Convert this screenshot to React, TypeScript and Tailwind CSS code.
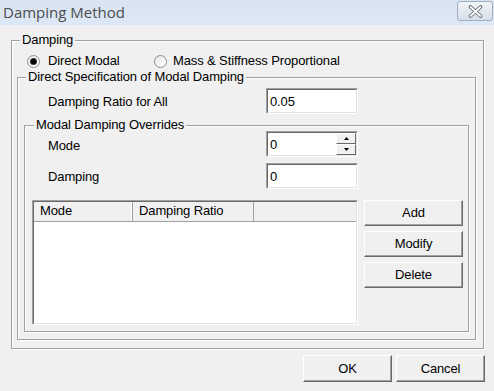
import React from 'react';

const font = "font-['Liberation_Sans',Arial,sans-serif] tracking-[-0.12px]";

const GroupBox: React.FC<{
  label: string;
  labelLeft: string;
  className: string;
  children?: React.ReactNode;
}> = ({ label, labelLeft, className, children }) => (
  <div
    className={`relative border border-[#a0a0a0] shadow-[1px_1px_0_#ffffff,inset_1px_1px_0_#ffffff] ${className}`}
  >
    <span
      className={`absolute top-[-9px] ${labelLeft} bg-[#f0f0f0] px-[2px] text-[13px] leading-[16px] text-black`}
    >
      {label}
    </span>
    {children}
  </div>
);

const Sunken: React.FC<{ className: string; children?: React.ReactNode }> = ({ className, children }) => (
  <div className={`border-t border-l border-t-[#a0a0a0] border-l-[#a0a0a0] border-b border-r border-b-white border-r-white ${className}`}>
    <div className="h-full w-full border-t border-l border-t-[#696969] border-l-[#696969] border-b border-r border-b-[#e3e3e3] border-r-[#e3e3e3] bg-white">
      {children}
    </div>
  </div>
);

const TextBox: React.FC<{ value: string }> = ({ value }) => (
  <Sunken className="w-[92px] h-[26px]">
    <div className="pl-[2px] pt-[4px] text-[13px] leading-[16px] text-black">{value}</div>
  </Sunken>
);

const Button: React.FC<{ label: string; className: string }> = ({ label, className }) => (
  <div
    className={`flex items-center justify-center border-t border-l border-t-white border-l-white border-b border-r border-b-[#696969] border-r-[#696969] bg-[#f0f0f0] shadow-[inset_-1px_-1px_0_#a0a0a0] text-[13px] text-black ${className}`}
  >
    {label}
  </div>
);

const Radio: React.FC<{ checked?: boolean }> = ({ checked }) => (
  <div className="flex h-[13px] w-[13px] items-center justify-center rounded-full border border-[#8e8f8f] bg-gradient-to-br from-[#e6e6e6] to-[#ffffff]">
    {checked && <div className="h-[5px] w-[5px] rounded-full bg-black shadow-[0_0_0_1px_#333]" />}
  </div>
);

const SpinHalf: React.FC<{ up?: boolean }> = ({ up }) => (
  <div className="flex h-[12px] w-[20px] items-center justify-center border-t border-l border-t-white border-l-white border-b border-r border-b-[#696969] border-r-[#696969] bg-[#f0f0f0]">
    <svg width="5" height="3" viewBox="0 0 5 3">
      {up ? <path d="M2.5 0 L5 3 L0 3 Z" fill="#000" /> : <path d="M0 0 L5 0 L2.5 3 Z" fill="#000" />}
    </svg>
  </div>
);

export default function App() {
  return (
    <div className={`flex h-[391px] w-[494px] flex-col bg-[#f0f0f0] ${font}`}>
      {/* Title bar */}
      <div className="flex h-[25px] items-start justify-between bg-gradient-to-b from-[#d8e4f2] to-[#dce8f5]">
        <span className="pl-[3px] pt-[2px] font-['Open_Sans',sans-serif] text-[15px] leading-[20px] tracking-normal text-[#4d4d4d]">
          Damping Method
        </span>
        <div className="mr-[1px] mt-[1px] flex h-[20px] w-[36px] items-center justify-center rounded-[3px] border border-[#a3adbb] bg-gradient-to-b from-[#f1f4f8] to-[#d7dfe9]">
          <svg width="15" height="13" viewBox="0 0 15 13">
            <path d="M2.5 2 L12.5 11 M12.5 2 L2.5 11" stroke="#5d6572" strokeWidth="3.6" strokeLinecap="round" />
            <path d="M2.5 2 L12.5 11 M12.5 2 L2.5 11" stroke="#ffffff" strokeWidth="1.8" strokeLinecap="round" />
          </svg>
        </div>
      </div>

      {/* Damping group */}
      <GroupBox label="Damping" labelLeft="left-[8px]" className="ml-[11px] mt-[15px] h-[309px] w-[473px]">
        <div className="flex h-[36px] items-start pl-[15px] pt-[13px]">
          <div className="flex w-[127px] items-center gap-[8px] text-[13px] leading-[14px]">
            <Radio checked />
            <span>Direct Modal</span>
          </div>
          <div className="flex items-center gap-[6px] text-[13px] leading-[14px]">
            <Radio />
            <span>Mass &amp; Stiffness Proportional</span>
          </div>
        </div>

        <GroupBox
          label="Direct Specification of Modal Damping"
          labelLeft="left-[8px]"
          className="ml-[5px] h-[263px] w-[459px]"
        >
          <div className="mt-[10px] flex h-[26px] items-center">
            <span className="w-[248px] pl-[30px] pt-[2px] text-[13px]">Damping Ratio for All</span>
            <TextBox value="0.05" />
          </div>

          <GroupBox
            label="Modal Damping Overrides"
            labelLeft="left-[9px]"
            className="ml-[6px] mt-[11px] h-[207px] w-[445px]"
          >
            <div className="mt-[5px] flex h-[26px] items-center">
              <span className="w-[241px] pl-[23px] pt-[3px] text-[13px]">Mode</span>
              <Sunken className="h-[26px] w-[92px]">
                <div className="flex h-full">
                  <div className="flex-1 pl-[2px] pt-[4px] text-[13px] leading-[16px]">0</div>
                  <div className="flex flex-col">
                    <SpinHalf up />
                    <SpinHalf />
                  </div>
                </div>
              </Sunken>
            </div>
            <div className="mt-[6px] flex h-[26px] items-center">
              <span className="w-[241px] pl-[23px] pt-[1px] text-[13px]">Damping</span>
              <TextBox value="0" />
            </div>

            <div className="mt-[11px] flex items-start pl-[7px]">
              <Sunken className="h-[125px] w-[326px]">
                <div className="flex h-[20px] border-b border-b-[#a0a0a0] bg-[#f0f0f0] text-[13px] leading-[18px]">
                  <div className="w-[99px] border-r border-r-[#a0a0a0] pl-[6px] shadow-[inset_-1px_0_0_#ffffff]">Mode</div>
                  <div className="w-[121px] border-r border-r-[#a0a0a0] pl-[6px]">Damping Ratio</div>
                  <div className="flex-1" />
                </div>
              </Sunken>
              <div className="ml-[6px] flex flex-col gap-[5px]">
                <Button label="Add" className="h-[26px] w-[99px]" />
                <Button label="Modify" className="h-[26px] w-[99px]" />
                <Button label="Delete" className="h-[26px] w-[99px]" />
              </div>
            </div>
          </GroupBox>
        </GroupBox>
      </GroupBox>

      {/* Footer buttons */}
      <div className="mt-[6px] flex justify-end gap-[4px] pr-[9px]">
        <Button label="OK" className="h-[27px] w-[89px]" />
        <Button label="Cancel" className="h-[27px] w-[89px]" />
      </div>
    </div>
  );
}
